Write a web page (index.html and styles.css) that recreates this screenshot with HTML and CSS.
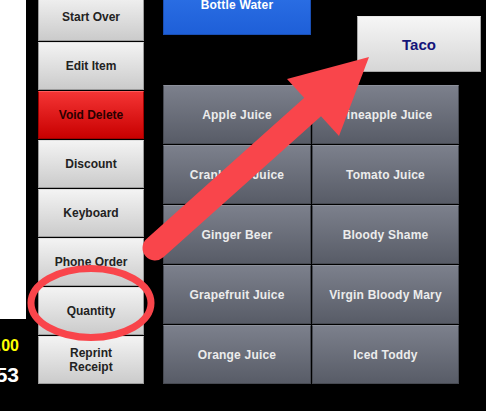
FILE: index.html
```html
<!DOCTYPE html>
<html lang="en">
<head>
  <meta charset="UTF-8">
  <title>POS Order Screen</title>
  <meta name="viewport" content="width=device-width, initial-scale=1.0">
  <link rel="stylesheet" href="styles.css">
</head>
<body>

<div class="screen">

  <!-- Order panel (cut off on the left) -->
  <div class="order-side">
    <div class="order-panel"></div>
    <div class="total total-due">.00</div>
    <div class="total total-sum">53</div>
  </div>

  <!-- Function buttons -->
  <div class="actions">
    <div class="btn">Start Over</div>
    <div class="btn">Edit Item</div>
    <div class="btn btn-red">Void Delete</div>
    <div class="btn">Discount</div>
    <div class="btn">Keyboard</div>
    <div class="btn">Phone Order</div>
    <div class="btn">Quantity</div>
    <div class="btn">Reprint<br>Receipt</div>
  </div>

  <!-- Menu items -->
  <div class="menu">
    <div class="menu-top">
      <div class="item item-blue">Bottle Water</div>
      <div class="taco">Taco</div>
    </div>
    <div class="item-grid">
      <div class="item">Apple Juice</div>
      <div class="item">Pineapple Juice</div>
      <div class="item">Cranberry Juice</div>
      <div class="item">Tomato Juice</div>
      <div class="item">Ginger Beer</div>
      <div class="item">Bloody Shame</div>
      <div class="item">Grapefruit Juice</div>
      <div class="item">Virgin Bloody Mary</div>
      <div class="item">Orange Juice</div>
      <div class="item">Iced Toddy</div>
    </div>
  </div>

  <!-- Annotation: circle round Quantity, arrow to the Taco button -->
  <svg class="markup" width="486" height="411" viewBox="0 0 486 411">
    <ellipse cx="91" cy="303" rx="60" ry="34.5" fill="none" stroke="#f9454b" stroke-width="7"/>
    <line x1="155" y1="248" x2="316" y2="104" stroke="#f9454b" stroke-width="25" stroke-linecap="round"/>
    <polygon points="287,79 369,57 339,136" fill="#f9454b"/>
  </svg>
</div>

</body>
</html>
```

FILE: styles.css
```css
body {
  margin: 0;
  background-color: #000;
  font-family: "Liberation Sans", Arial, sans-serif;
  overflow: hidden;
}

.screen {
  position: relative;
  width: 486px;
  height: 411px;
  display: flex;
  overflow: hidden;
}

.order-side {
  width: 38px;
  flex-shrink: 0;
}

.order-panel {
  width: 26px;
  height: 319px;
  background-color: #fff;
}

.total {
  width: 19px;
  display: flex;
  justify-content: flex-end;
  white-space: nowrap;
  font-weight: bold;
}

.total-due {
  margin-top: 17px;
  font-size: 16px;
  line-height: 20px;
  color: #ffff00;
}

.total-sum {
  margin-top: 6px;
  font-size: 21px;
  line-height: 26px;
  color: #fff;
}

.actions {
  width: 106px;
  flex-shrink: 0;
  margin-top: -7px;
  display: flex;
  flex-direction: column;
  gap: 1px;
}

.btn {
  box-sizing: border-box;
  height: 48px;
  display: flex;
  align-items: center;
  justify-content: center;
  text-align: center;
  font-size: 12px;
  line-height: 14px;
  font-weight: bold;
  color: #222;
  background: linear-gradient(#f3f3f3, #cbcbcb);
  border: 1px solid #9c9c9c;
  border-top-color: #e0e0e0;
}

.btn-red {
  color: #2a0000;
  background: linear-gradient(#f43434, #c80000);
  border-color: #a00000;
  border-top-color: #ff5a5a;
}

.menu {
  margin-left: 19px;
  margin-top: -25px;
}

.menu-top {
  height: 60px;
  display: flex;
  align-items: flex-start;
}

.item {
  box-sizing: border-box;
  height: 59px;
  display: flex;
  align-items: center;
  justify-content: center;
  font-size: 12px;
  font-weight: bold;
  letter-spacing: 0.2px;
  color: #ececec;
  background: linear-gradient(#7c808c, #585c67);
  border: 1px solid #474a52;
  border-top-color: #8c909b;
}

.item-blue {
  width: 148px;
  height: 60px;
  color: #fff;
  background: linear-gradient(#3176ea, #1e5fd8);
  border-color: #1a4fb4;
  border-top-color: #4a8af0;
}

.taco {
  box-sizing: border-box;
  flex-shrink: 0;
  width: 124px;
  height: 56px;
  margin-left: 46px;
  margin-top: 41px;
  display: flex;
  align-items: center;
  justify-content: center;
  font-size: 15px;
  font-weight: bold;
  color: #14147a;
  background: linear-gradient(#f6f6f6, #d6d6d6);
  border: 1px solid #a8a8a8;
  border-top-color: #e8e8e8;
}

.item-grid {
  margin-top: 50px;
  display: grid;
  grid-template-columns: 148px 147px;
  grid-auto-rows: 59px;
  gap: 1px;
}

.markup {
  position: absolute;
  left: 0;
  top: 0;
  pointer-events: none;
}
```
